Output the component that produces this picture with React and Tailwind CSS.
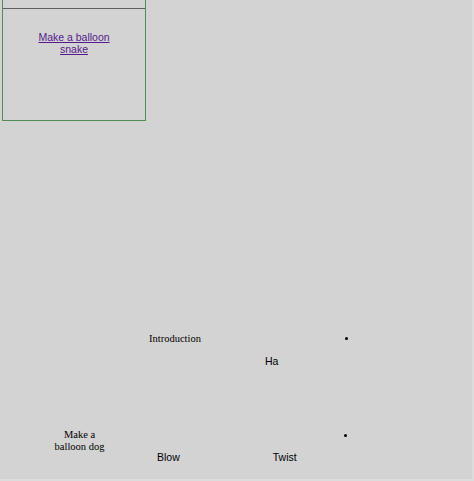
export default function App() {
  const serif = "font-['Liberation_Serif',serif]";
  const sans = "font-['Liberation_Sans',Arial,sans-serif]";

  return (
    <div className="w-[474px] h-[481px] bg-[#dcdcdc]">
      <div className="w-[472px] h-[479px] bg-[#d3d3d3] text-[10.5px] leading-[11.5px] text-black">
        {/* card, top cut off */}
        <div className="ml-[2px] w-[144px] h-[121px] border border-t-0 border-[#4f8f4f]">
          <div className="h-[9px] border-b border-[#5f5f5f]" />
          <div className={`pt-[23px] flex justify-center ${sans}`}>
            <a href="#" className="w-[80px] text-center text-[#551a8b] underline">
              Make a balloon snake
            </a>
          </div>
        </div>

        {/* intro row */}
        <div className={`mt-[212px] flex items-center ${serif}`}>
          <span className="ml-[149px]">Introduction</span>
          <span className="ml-[144px] w-[3px] h-[3px] rounded-full bg-black" />
        </div>
        <div className={`mt-[11px] pl-[265px] ${sans}`}>Ha</div>

        {/* dog row */}
        <div className="mt-[62px] flex items-start">
          <div className={`ml-[53px] w-[53px] text-center ${serif}`}>Make a balloon dog</div>
          <span className="ml-[238px] mt-[4.5px] w-[3px] h-[3px] rounded-full bg-black" />
        </div>
        <div className={`flex ${sans}`}>
          <span className="ml-[157px]">Blow</span>
          <span className="ml-[93px]">Twist</span>
        </div>
      </div>
    </div>
  );
}
